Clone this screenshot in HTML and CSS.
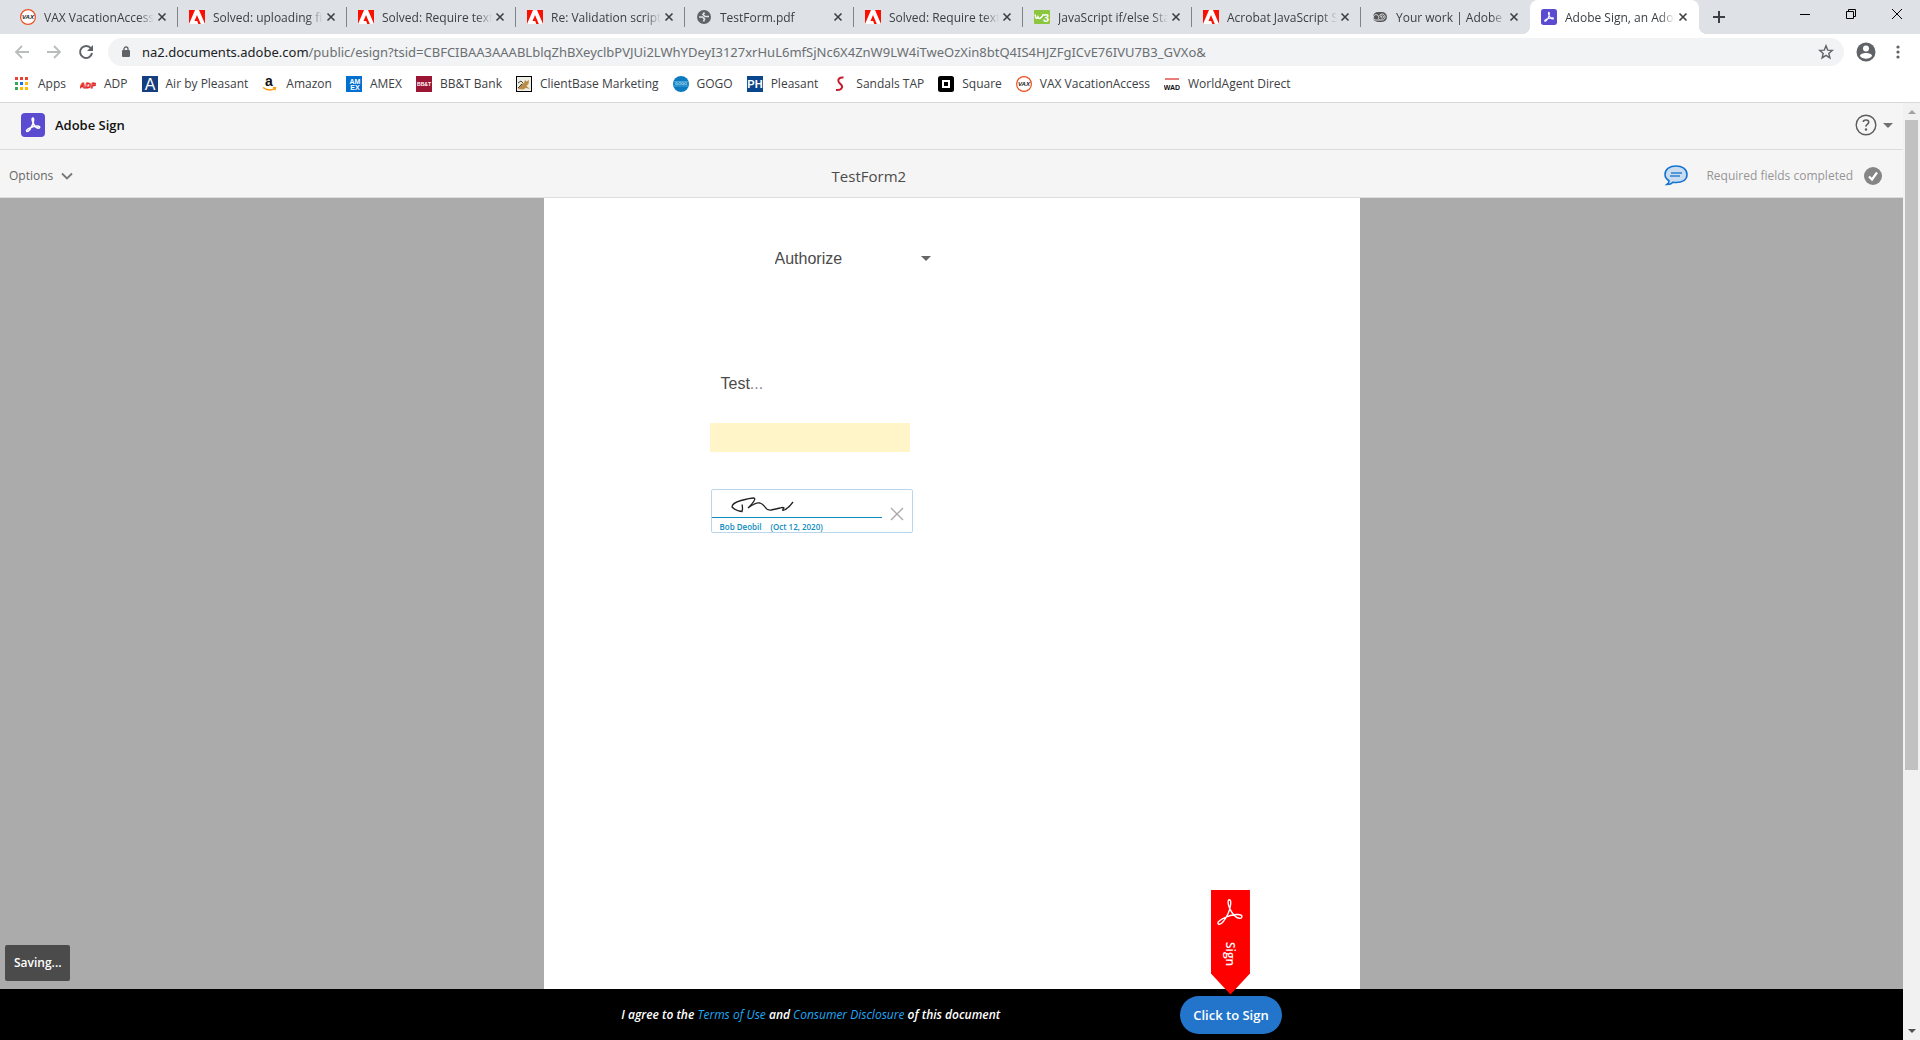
FILE: index.html
```html
<!DOCTYPE html>
<html lang="en">
<head>
    <meta charset="UTF-8">
    <meta name="viewport" content="width=device-width, initial-scale=1.0">
    <title>Adobe Sign, an Adobe Document Cloud solution</title>
    <link rel="stylesheet" href="styles.css">
</head>
<body>
    <!-- Shared icons -->
    <svg class="defs" width="0" height="0" aria-hidden="true">
        <symbol id="i-adobe" viewBox="0 0 16 16">
            <rect y="1" width="16" height="14" fill="#fff"/>
            <path fill="#fa0f00" d="M0 1h6L0 15zM10 1h6v14zM8 6l3.800 9H9.300l-1.100-3H5.500z"/>
        </symbol>
        <symbol id="i-vax" viewBox="0 0 16 16">
            <circle cx="8" cy="8" r="7.400" fill="#fff" stroke="#f04e23" stroke-width="1.200"/>
            <text x="8" y="10.300" text-anchor="middle" font-size="6" font-weight="900" font-style="italic" fill="#222">VAX</text>
        </symbol>
        <symbol id="i-close" viewBox="0 0 16 16">
            <path d="M4.500 4.500l7 7m0-7l-7 7" stroke="#3c4043" stroke-width="1.600" fill="none"/>
        </symbol>
        <symbol id="i-acrobat" viewBox="0 0 24 24">
            <path fill="none" stroke="currentColor" stroke-linejoin="round" d="M11.500 1.500C9.600 1.500 10.300 6 12 9.500c2 4 5 7.500 8 7.900 2.500.3 3.200-2.400.5-3-4-.8-10.500 1.200-15 3.400-3.500 1.800-4.700 3.700-3.300 4.600 2.300 1.100 5.800-3.900 8.300-9.400 2-4.500 3.100-11.500 1-11.500z"/>
        </symbol>
        <symbol id="i-sign" viewBox="0 0 24 24">
            <rect width="24" height="24" rx="4" fill="#5b4bd0"/>
            <path transform="translate(4.500 4) scale(.64)" fill="none" stroke="#fff" stroke-width="2.400" stroke-linejoin="round" d="M11.500 1.500C9.600 1.500 10.300 6 12 9.500c2 4 5 7.500 8 7.900 2.500.3 3.200-2.400.5-3-4-.8-10.500 1.200-15 3.400-3.500 1.800-4.700 3.700-3.300 4.600 2.300 1.100 5.800-3.900 8.300-9.400 2-4.500 3.100-11.500 1-11.500z"/>
        </symbol>
    </svg>

    <!-- Tab strip -->
    <div class="tab-strip">
        <div class="tab">
            <svg class="favicon"><use href="#i-vax"/></svg>
            <span class="tab-title">VAX VacationAccess</span>
            <button class="tab-close" aria-label="Close tab"><svg><use href="#i-close"/></svg></button>
        </div>
        <div class="tab">
            <svg class="favicon"><use href="#i-adobe"/></svg>
            <span class="tab-title">Solved: uploading file</span>
            <button class="tab-close" aria-label="Close tab"><svg><use href="#i-close"/></svg></button>
        </div>
        <div class="tab">
            <svg class="favicon"><use href="#i-adobe"/></svg>
            <span class="tab-title">Solved: Require text fi</span>
            <button class="tab-close" aria-label="Close tab"><svg><use href="#i-close"/></svg></button>
        </div>
        <div class="tab">
            <svg class="favicon"><use href="#i-adobe"/></svg>
            <span class="tab-title">Re: Validation script f</span>
            <button class="tab-close" aria-label="Close tab"><svg><use href="#i-close"/></svg></button>
        </div>
        <div class="tab">
            <svg class="favicon" viewBox="0 0 16 16">
                <circle cx="8" cy="8" r="7" fill="#5f6368"/>
                <path d="M8.500 3.500L7 5.500 9 7.500h4M3 8h3.500L8.500 10 7.500 12.500" fill="none" stroke="#dee1e6" stroke-width="1.700"/>
            </svg>
            <span class="tab-title">TestForm.pdf</span>
            <button class="tab-close" aria-label="Close tab"><svg><use href="#i-close"/></svg></button>
        </div>
        <div class="tab">
            <svg class="favicon"><use href="#i-adobe"/></svg>
            <span class="tab-title">Solved: Require text fi</span>
            <button class="tab-close" aria-label="Close tab"><svg><use href="#i-close"/></svg></button>
        </div>
        <div class="tab">
            <svg class="favicon" viewBox="0 0 16 16">
                <rect y="1" width="16" height="14" rx="1" fill="#8cc63f"/>
                <path d="M1 5.500l1 3.500q1.300 1 2-1 .8 2 2.200 1.200Q8 8.500 9.500 5" fill="none" stroke="#fff" stroke-width="1.500"/>
                <text x="9" y="12.500" font-size="11" font-weight="700" fill="#fff">3</text>
            </svg>
            <span class="tab-title">JavaScript if/else State</span>
            <button class="tab-close" aria-label="Close tab"><svg><use href="#i-close"/></svg></button>
        </div>
        <div class="tab">
            <svg class="favicon"><use href="#i-adobe"/></svg>
            <span class="tab-title">Acrobat JavaScript Scr</span>
            <button class="tab-close" aria-label="Close tab"><svg><use href="#i-close"/></svg></button>
        </div>
        <div class="tab tab-before-active">
            <svg class="favicon" viewBox="0 0 16 16">
                <rect x="1" y="3" width="14" height="10" rx="5" fill="#555"/>
                <path d="M7.500 10.500l-1-1a2.700 2.700 0 1 0-2 1.500h5.500a3 3 0 1 0-2.300-4.800L9.500 8" fill="none" stroke="#dee1e6"/>
                <circle cx="10.300" cy="8" r="1.300" fill="none" stroke="#dee1e6" stroke-width=".8"/>
            </svg>
            <span class="tab-title">Your work | Adobe Cre</span>
            <button class="tab-close" aria-label="Close tab"><svg><use href="#i-close"/></svg></button>
        </div>
        <div class="tab active">
            <svg class="favicon"><use href="#i-sign"/></svg>
            <span class="tab-title">Adobe Sign, an Adobe</span>
            <button class="tab-close" aria-label="Close tab"><svg><use href="#i-close"/></svg></button>
        </div>
        <button class="new-tab" aria-label="New tab"><svg viewBox="0 0 12 12"><path d="M6 0v12M0 6h12" stroke="#3c4043" stroke-width="2"/></svg></button>
        <div class="window-controls">
            <button aria-label="Minimize"><svg viewBox="0 0 10 10"><path d="M0 5.500h10" stroke="#000"/></svg></button>
            <button aria-label="Restore"><svg viewBox="0 0 10 10"><path d="M.5 2.500h7v7h-7zM2.500 2.500v-2h7v7h-2" fill="none" stroke="#000"/></svg></button>
            <button aria-label="Close"><svg viewBox="0 0 10 10"><path d="M0 0l10 10M10 0L0 10" stroke="#000"/></svg></button>
        </div>
    </div>

    <!-- Address bar -->
    <div class="toolbar">
        <button aria-label="Back"><svg viewBox="0 0 16 16"><path d="M15 8H2m6-6L2 8l6 6" fill="none" stroke="#babcbe" stroke-width="1.800"/></svg></button>
        <button aria-label="Forward"><svg viewBox="0 0 16 16"><path d="M1 8h13M8 2l6 6-6 6" fill="none" stroke="#babcbe" stroke-width="1.800"/></svg></button>
        <button aria-label="Reload"><svg viewBox="0 0 16 16"><path d="M13 4.500A6 6 0 1 0 14 9" fill="none" stroke="#5f6368" stroke-width="2"/><path d="M15 1v6H9z" fill="#5f6368"/></svg></button>
        <div class="omnibox">
            <svg class="lock" viewBox="0 0 10 14"><rect x="1" y="5" width="8" height="7" rx="1" fill="#5f6368"/><path d="M3 5.500V4a2 2 0 0 1 4 0v1.500" fill="none" stroke="#5f6368" stroke-width="1.300"/></svg>
            <span class="url"><b>na2.documents.adobe.com</b>/public/esign?tsid=CBFCIBAA3AAABLblqZhBXeyclbPVJUi2LWhYDeyI3127xrHuL6mfSjNc6X4ZnW9LW4iTweOzXin8btQ4IS4HJZFgICvE76IVU7B3_GVXo&amp;</span>
            <button aria-label="Bookmark this tab"><svg viewBox="0 0 16 16"><path d="M8 1.800l1.700 4.300 4.600.3-3.500 3 1.100 4.500L8 11.400l-3.900 2.500 1.100-4.500-3.500-3 4.600-.3z" fill="none" stroke="#5f6368" stroke-width="1.400"/></svg></button>
        </div>
        <div class="toolbar-end">
            <button class="profile" aria-label="Profile"><svg viewBox="0 0 20 20"><circle cx="10" cy="10" r="9.500" fill="#5f6368"/><circle cx="10" cy="6.500" r="3" fill="#fff"/><path d="M4 14c0-4 12-4 12 0-2.500 3.600-9.500 3.600-12 0z" fill="#fff"/></svg></button>
            <button aria-label="Menu"><svg viewBox="0 0 16 16" fill="#5f6368"><circle cx="8" cy="3" r="1.600"/><circle cx="8" cy="8" r="1.600"/><circle cx="8" cy="13" r="1.600"/></svg></button>
        </div>
    </div>

    <!-- Bookmarks bar -->
    <nav class="bookmarks">
        <a href="#"><svg viewBox="0 0 16 16"><path d="M1 1h3v3H1zM6 1h3v3H6zM11 1h3v3h-3z" fill="#ea4335"/><path d="M1 6h3v3H1zM1 11h3v3H1z" fill="#34a853"/><path d="M6 6h3v3H6z" fill="#1a73e8"/><path d="M11 6h3v3h-3zM6 11h3v3H6zM11 11h3v3h-3z" fill="#fbbc04"/></svg>Apps</a>
        <a href="#"><svg viewBox="0 0 16 16"><text x="8" y="11.500" text-anchor="middle" font-size="8" font-weight="900" font-style="italic" fill="#fff" stroke="#e2231a" stroke-width=".8">ADP</text></svg>ADP</a>
        <a href="#"><svg viewBox="0 0 16 16"><rect width="16" height="16" fill="#153e7e"/><text x="8" y="14" text-anchor="middle" font-size="16" fill="#fff">A</text></svg>Air by Pleasant</a>
        <a href="#"><svg viewBox="0 0 16 16"><text x="7" y="9.500" text-anchor="middle" font-size="14" font-weight="900" fill="#111">a</text><path d="M1 11.500q6 4.500 12 1M11 11.500l2.500.3-.7 2.400" fill="none" stroke="#f90" stroke-width="1.400"/></svg>Amazon</a>
        <a href="#"><svg viewBox="0 0 16 16"><rect width="16" height="16" fill="#016fd0"/><text x="9" y="8" text-anchor="middle" font-size="7" font-weight="900" fill="#fff">AM</text><text x="9" y="14" text-anchor="middle" font-size="7" font-weight="900" fill="#fff">EX</text></svg>AMEX</a>
        <a href="#"><svg viewBox="0 0 16 16"><rect width="16" height="16" fill="#9b1535"/><text x="8" y="10" text-anchor="middle" font-size="5" font-weight="700" fill="#fff">BB&amp;T</text></svg>BB&amp;T Bank</a>
        <a href="#"><svg viewBox="0 0 16 16"><rect x=".5" y=".5" width="15" height="15" fill="#efeee6" stroke="#000"/><path d="M2 13l3-5 3-1 1-3 1.500 1.500L13 4l-.5 4-2 2 3.500 3-4-1-3 1.500z" fill="#b98d47"/><path d="M2 7l3-2 2 2M2 12l4-4" stroke="#444" fill="none"/></svg>ClientBase Marketing</a>
        <a href="#"><svg viewBox="0 0 16 16"><circle cx="8" cy="8" r="8" fill="#0a7bc1"/><path d="M1 5.500h14M1 10h14" stroke="#49a5d8"/><text x="8" y="9.300" text-anchor="middle" font-size="4" font-weight="700" fill="#bfe2f5">GOGO</text></svg>GOGO</a>
        <a href="#"><svg viewBox="0 0 16 16"><rect width="16" height="16" fill="#0b458b"/><text x="8" y="12" text-anchor="middle" font-size="11" font-weight="900" fill="#fff">PH</text></svg>Pleasant</a>
        <a href="#"><svg viewBox="0 0 16 16"><path d="M11.500 1.500C8 1 5.500 3 6.500 5.500c.7 2 4.500 3.500 3.500 6-.8 2-3.500 2.700-6 2.500" fill="none" stroke="#c41e2d" stroke-width="2"/></svg>Sandals TAP</a>
        <a href="#"><svg viewBox="0 0 16 16"><rect width="16" height="16" rx="2.500"/><rect x="4" y="4" width="8" height="8" fill="#fff"/><rect x="6" y="6" width="4" height="4"/></svg>Square</a>
        <a href="#"><svg><use href="#i-vax"/></svg>VAX VacationAccess</a>
        <a href="#"><svg viewBox="0 0 16 16"><path d="M1 3h14" stroke="#e0524f" stroke-width="1.500"/><text x="8" y="13.500" text-anchor="middle" font-size="7" font-weight="900" fill="#111">WAD</text></svg>WorldAgent Direct</a>
    </nav>

    <!-- Web page -->
    <div class="content">
        <main class="esign">
            <header class="app-header">
                <svg class="logo"><use href="#i-sign"/></svg>
                <span class="product">Adobe Sign</span>
                <button class="help" aria-label="Help">
                    <svg class="help-icon" viewBox="0 0 22 22"><circle cx="11" cy="11" r="9.800" fill="none" stroke="#5c5c5c" stroke-width="1.400"/><path d="M8.300 8q0-2 2.700-2t2.700 2.200q0 1.300-1.400 2.200T11 12.600" fill="none" stroke="#5c5c5c" stroke-width="1.600"/><circle cx="11" cy="15.500" r="1.200" fill="#5c5c5c"/></svg>
                    <svg class="caret" viewBox="0 0 10 5"><path d="M0 0h10L5 5z" fill="#707070"/></svg>
                </button>
            </header>
            <div class="doc-bar">
                <button class="options">Options <svg viewBox="0 0 12 12"><path d="M1 3.500l5 5 5-5" fill="none" stroke="#777" stroke-width="1.800"/></svg></button>
                <h1>TestForm2</h1>
                <div class="status">
                    <button aria-label="Comments"><svg class="comment" viewBox="0 0 24 21"><path d="M12 1c6 0 11 3 11 8.500S18 17.500 12 17.500c-1 0-2-.1-3-.3Q7 19.500 3 19.500q2-1.500 2-3.800C2.500 14.200 1 12 1 9.500 1 4 6 1 12 1z" fill="#c9dcf0" stroke="#1473d1" stroke-width="1.600"/><path d="M7 8h11M6 11h10" stroke="#2f7fd0" stroke-width="1.300"/></svg></button>
                    <span>Required fields completed</span>
                    <svg class="check" viewBox="0 0 18 18"><circle cx="9" cy="9" r="9" fill="#858585"/><path d="M5 9.500L8 12.500l5-7" fill="none" stroke="#fff" stroke-width="2.200"/></svg>
                </div>
            </div>

            <div class="viewer">
                <form class="paper">
                    <div class="select-field">
                        <select aria-label="Authorization">
                            <option>Authorize</option>
                        </select>
                        <svg class="caret" viewBox="0 0 10 5"><path d="M0 0h10L5 5z" fill="#666"/></svg>
                    </div>
                    <label class="test-label" for="test">Test<span>...</span></label>
                    <input class="text-field" id="test" type="text">
                    <div class="signature">
                        <div class="signature-body">
                            <svg viewBox="0 0 64 16" aria-label="Signature"><path d="M11 7.500q1 4 0 7Q5 14 1 10 1 6 10 3.500T23 1q3 1-6 10 8-6 12-5 3 1 5 4 2 3.500 6 3 5-1 9-2 3-1 4 0-2 2-1 2.500Q57 12 62 5" fill="none" stroke="#222" stroke-width="1.300"/></svg>
                            <p><span>Bob Deobil</span><span>(Oct 12, 2020)</span></p>
                        </div>
                        <button type="button" aria-label="Clear signature"><svg viewBox="0 0 14 14"><path d="M1 1l12 12M13 1L1 13" stroke="#aaa" stroke-width="1.400"/></svg></button>
                    </div>
                </form>
                <div class="toast">Saving...</div>
            </div>

            <footer class="sign-bar">
                <p>I agree to the <a href="#">Terms of Use</a> and <a href="#">Consumer Disclosure</a> of this document</p>
                <div class="sign-action">
                    <div class="sign-flag">
                        <svg><use href="#i-acrobat"/></svg>
                        <span>Sign</span>
                    </div>
                    <button>Click to Sign</button>
                </div>
            </footer>
        </main>
        <div class="scrollbar">
            <svg viewBox="0 0 8 4"><path d="M4 0l4 4H0z" fill="#a3a3a3"/></svg>
            <div class="track"><div class="thumb"></div></div>
            <svg viewBox="0 0 8 4"><path d="M0 0h8L4 4z" fill="#505050"/></svg>
        </div>
    </div>
</body>
</html>
```
FILE: styles.css
```css
* {
    box-sizing: border-box;
}
body {
    display: flex;
    flex-direction: column;
    height: 100vh;
    margin: 0;
    overflow: hidden;
    font-family: "Open Sans", "Noto Sans", sans-serif;
    font-size: 12px;
    color: #3c4043;
    background-color: #ffffff;
}
button {
    display: flex;
    align-items: center;
    justify-content: center;
    padding: 0;
    border: 0;
    background: none;
    font: inherit;
    color: inherit;
}
svg {
    display: block;
    flex-shrink: 0;
}
svg text {
    font-family: "Liberation Sans", sans-serif;
}
.defs {
    position: absolute;
}

/* Tab strip */
.tab-strip {
    display: flex;
    height: 34px;
    padding-left: 9px;
    background-color: #dee1e6;
}
.tab {
    display: flex;
    align-items: center;
    flex: 0 1 169px;
    min-width: 0;
    padding: 0 8px 0 11px;
    position: relative;
}
.tab::after {
    content: "";
    position: absolute;
    right: 0;
    top: 7px;
    width: 1px;
    height: 20px;
    background-color: #808387;
}
.tab-before-active::after {
    display: none;
}
.favicon {
    width: 16px;
    height: 16px;
}
.tab-title {
    flex: 1;
    min-width: 0;
    margin: 0 0 0 8px;
    overflow: hidden;
    white-space: nowrap;
    -webkit-mask-image: linear-gradient(to right, #000 86%, transparent);
    mask-image: linear-gradient(to right, #000 86%, transparent);
}
.tab-close svg {
    width: 16px;
    height: 16px;
}
.tab.active {
    background-color: #ffffff;
    border-radius: 8px 8px 0 0;
}
.tab.active::before,
.tab.active::after {
    content: "";
    position: absolute;
    top: auto;
    bottom: 0;
    width: 8px;
    height: 8px;
}
.tab.active::before {
    left: -8px;
    background: radial-gradient(circle at 0 0, #dee1e6 8px, #ffffff 8px);
}
.tab.active::after {
    right: -8px;
    background: radial-gradient(circle at 100% 0, #dee1e6 8px, #ffffff 8px);
}
.new-tab {
    width: 28px;
    margin-left: 6px;
}
.new-tab svg {
    width: 12px;
    height: 12px;
}
.window-controls {
    display: flex;
    height: 28px;
    margin-left: auto;
}
.window-controls button {
    width: 46px;
}
.window-controls svg {
    width: 10px;
    height: 10px;
}

/* Address bar */
.toolbar {
    display: flex;
    align-items: center;
    gap: 16px;
    height: 36px;
    padding: 0 14px;
}
.toolbar svg {
    width: 16px;
    height: 16px;
}
.omnibox {
    display: flex;
    align-items: center;
    flex: 1;
    min-width: 0;
    height: 28px;
    margin: 0 -4px 0 -2px;
    padding: 0 10px 0 12px;
    border-radius: 14px;
    background-color: #f1f3f4;
}
.omnibox .lock {
    width: 12px;
    height: 14px;
}
.url {
    flex: 1;
    margin-left: 10px;
    overflow: hidden;
    white-space: nowrap;
    font-family: "Noto Sans", "Open Sans", sans-serif;
    font-size: 13px;
    color: #6b6f73;
}
.url b {
    font-weight: 400;
    color: #202124;
}
.toolbar-end {
    display: flex;
    align-items: center;
    gap: 14px;
}
.toolbar .profile svg {
    width: 20px;
    height: 20px;
}

/* Bookmarks bar */
.bookmarks {
    display: flex;
    align-items: center;
    gap: 14px;
    height: 33px;
    padding: 0 14px 5px;
    border-bottom: 1px solid #d8d9db;
}
.bookmarks a {
    display: flex;
    align-items: center;
    gap: 8px;
    color: #3c4043;
    text-decoration: none;
    white-space: nowrap;
}
.bookmarks svg {
    width: 16px;
    height: 16px;
}

/* Adobe Sign */
.content {
    display: flex;
    flex: 1;
    min-height: 0;
}
.esign {
    display: flex;
    flex-direction: column;
    flex: 1;
    min-width: 0;
}
.app-header {
    display: flex;
    align-items: center;
    height: 47px;
    padding: 0 10px 2px 21px;
    background-color: #f5f5f5;
    border-bottom: 1px solid #dddddd;
}
.logo {
    width: 24px;
    height: 24px;
}
.product {
    margin-left: 10px;
    font-size: 13px;
    font-weight: 600;
    color: #111111;
}
.help {
    gap: 6px;
    margin-left: auto;
}
.help-icon {
    width: 22px;
    height: 22px;
}
.caret {
    width: 10px;
    height: 5px;
}
.doc-bar {
    display: flex;
    align-items: center;
    justify-content: space-between;
    height: 48px;
    padding: 4px 21px 0 9px;
    background-color: #f5f5f5;
    border-bottom: 1px solid #dddddd;
}
.options {
    gap: 8px;
    color: #666666;
}
.options svg {
    width: 12px;
    height: 12px;
}
.doc-bar h1 {
    margin: 0;
    font-size: 15px;
    font-weight: 400;
    color: #4b4b4b;
}
.status {
    display: flex;
    align-items: center;
    color: #959595;
}
.comment {
    width: 24px;
    height: 21px;
    margin-right: 18px;
}
.check {
    width: 18px;
    height: 18px;
    margin-left: 11px;
}

/* Document */
.viewer {
    display: flex;
    justify-content: center;
    flex: 1;
    min-height: 0;
    position: relative;
    background-color: #ababab;
}
.paper {
    display: flex;
    flex-direction: column;
    align-items: flex-start;
    width: 816px;
    padding: 44px 166px 0;
    background-color: #ffffff;
    font-family: "Liberation Sans", Arial, sans-serif;
    font-size: 16px;
    color: #4b4b4b;
}
.select-field {
    display: flex;
    align-items: center;
    width: 165px;
    height: 32px;
    margin-left: 56px;
}
.select-field select {
    flex: 1;
    height: 32px;
    margin-right: -10px;
    padding: 0 9px;
    appearance: none;
    border: 0;
    background: none;
    font: inherit;
    color: inherit;
}
.test-label {
    margin: 101px 0 0 11px;
    line-height: 18px;
}
.test-label span {
    color: #888888;
}
.text-field {
    width: 200px;
    height: 29px;
    margin-top: 30px;
    padding: 0 8px;
    border: 0;
    background-color: #fff5c8;
    font: inherit;
}
.signature {
    display: flex;
    width: 202px;
    height: 44px;
    margin: 37px 0 0 1px;
    border: 1px solid #b8d6ec;
    border-radius: 2px;
}
.signature-body {
    width: 170px;
    padding-top: 7px;
}
.signature-body svg {
    width: 64px;
    height: 16px;
    margin-left: 19px;
}
.signature-body p {
    display: flex;
    gap: 9px;
    margin: 4px 0 0;
    padding: 2px 8px 0;
    border-top: 1px solid #0d8cc0;
    font-family: "Open Sans", "Noto Sans", sans-serif;
    font-size: 8px;
    font-weight: 600;
    line-height: 14px;
    color: #0d8cc0;
    white-space: nowrap;
}
.signature button {
    flex: 1;
    padding-top: 6px;
}
.signature button svg {
    width: 14px;
    height: 14px;
}
.toast {
    position: absolute;
    left: 5px;
    bottom: 8px;
    padding: 0 9px;
    border-radius: 2px;
    background-color: #4b4b4b;
    font-size: 12px;
    font-weight: 600;
    line-height: 36px;
    color: #ffffff;
}

/* Agreement bar */
.sign-bar {
    display: flex;
    align-items: center;
    justify-content: center;
    gap: 180px;
    height: 51px;
    background-color: #000000;
}
.sign-bar p {
    margin: 0;
    font-size: 12px;
    font-style: italic;
    font-weight: 600;
    color: #ffffff;
}
.sign-bar a {
    font-weight: 400;
    color: #20a8f4;
    text-decoration: none;
}
.sign-action {
    position: relative;
}
.sign-action button {
    height: 38px;
    padding: 0 13px;
    border-radius: 19px;
    background-color: #2275ca;
    font-size: 13px;
    font-weight: 600;
    color: #ffffff;
}
.sign-flag {
    position: absolute;
    bottom: 39px;
    left: 50%;
    margin-left: -20px;
    width: 39px;
    height: 105px;
    display: flex;
    flex-direction: column;
    align-items: center;
    padding-top: 8px;
    background-color: #ff0000;
    clip-path: polygon(0 0, 100% 0, 100% 80%, 50% 100%, 0 80%);
    color: #ffffff;
}
.sign-flag svg {
    width: 28px;
    height: 28px;
    stroke-width: 1.2;
}
.sign-flag span {
    margin-top: 16px;
    writing-mode: vertical-rl;
    font-size: 12px;
    font-weight: 600;
    line-height: 16px;
}

/* Scrollbar */
.scrollbar {
    display: flex;
    flex-direction: column;
    align-items: center;
    width: 17px;
    padding: 7px 0;
    background-color: #f1f1f1;
}
.scrollbar svg {
    width: 8px;
    height: 4px;
}
.track {
    flex: 1;
    align-self: stretch;
    margin: 6px 2px;
}
.thumb {
    height: 72%;
    background-color: #c1c1c1;
}
```
